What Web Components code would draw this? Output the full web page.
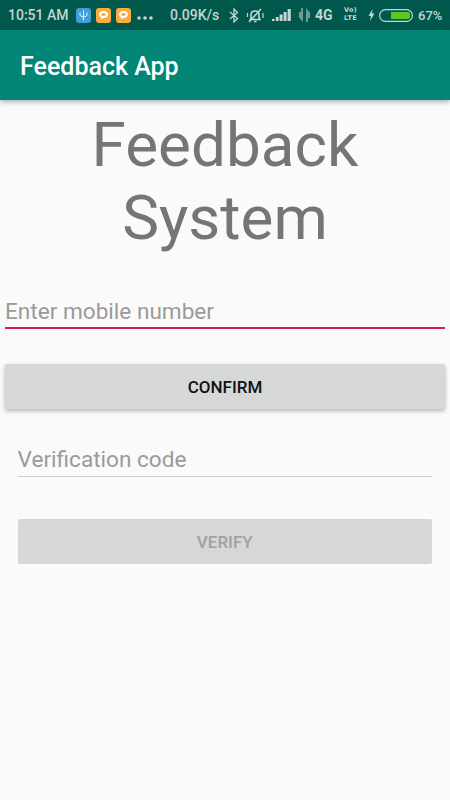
<!doctype html>
<html>
<head>
<meta charset="utf-8">
<style>
html, body { margin: 0; height: 100%; background: #fafafa; }
body { font-family: Roboto, "Liberation Sans", sans-serif; }
</style>
</head>
<body>
<app-shell>
  <status-bar slot="top"></status-bar>
  <app-bar slot="top">Feedback App</app-bar>
  <page-title>Feedback System</page-title>
  <text-field active placeholder="Enter mobile number"></text-field>
  <raised-button>CONFIRM</raised-button>
  <text-field inset placeholder="Verification code"></text-field>
  <raised-button inset disabled>VERIFY</raised-button>
</app-shell>

<script>
class AppShell extends HTMLElement {
  constructor() {
    super()
    this.attachShadow({ mode: 'open' }).innerHTML = `
<style>
:host { display: flex; flex-direction: column; height: 800px; background: #fafafa; }
main { display: flex; flex-direction: column; }
</style>
<slot name="top"></slot>
<main><slot></slot></main>`
  }
}

class StatusBar extends HTMLElement {
  constructor() {
    super()
    this.attachShadow({ mode: 'open' }).innerHTML = `
<style>
:host {
  display: flex; align-items: center; height: 30px; background: #00574b; color: #c3d6d2;
  font: 500 14px Roboto, sans-serif; white-space: nowrap; padding-left: 8px; box-sizing: border-box;
}
svg { display: block; flex: none; }
.time { width: 68px; }
.app { width: 15px; height: 15px; border-radius: 3px; margin-right: 5px; flex: none; display: flex; align-items: center; justify-content: center; }
.speed { margin-left: 17px; width: 59px; }
.g4 { font-size: 14px; font-weight: 700; margin-left: 4px; width: 19px; }
.volte { font: 700 6.5px/7.7px "DejaVu Sans", sans-serif; text-align: center; margin-left: 9px; width: 15px; letter-spacing: .3px; }
.pct { margin-left: 5px; font-size: 13px; }
</style>
<span class="time">10:51 AM</span>
<span class="app" style="background:#3f9fd8">
  <svg width="9" height="11" viewBox="0 0 9 11" fill="none" stroke="#e8f4fb" stroke-width="1"><path d="M4.5 0.5V10.5M1 2.5V5Q1 6.5 4.5 7Q8 6.5 8 5V2.5"/></svg>
</span>
<span class="app" style="background:#f9ae3c">
  <svg width="11" height="10" viewBox="0 0 11 10"><path fill="#fff" d="M5.5 1C8 1 10 2.5 10 4.5S8 8 5.5 8L3 9.3 3.4 7.5C2 6.9 1 5.8 1 4.5 1 2.5 3 1 5.5 1Z"/><ellipse cx="5.5" cy="4.5" rx="2.4" ry="1.4" fill="#f9ae3c"/></svg>
</span>
<span class="app" style="background:#f9ae3c">
  <svg width="11" height="10" viewBox="0 0 11 10"><path fill="#fff" d="M5.5 1C8 1 10 2.5 10 4.5S8 8 5.5 8L3 9.3 3.4 7.5C2 6.9 1 5.8 1 4.5 1 2.5 3 1 5.5 1Z"/><ellipse cx="5.5" cy="4.5" rx="2.4" ry="1.4" fill="#f9ae3c"/></svg>
</span>
<svg width="16" height="4" viewBox="0 0 16 4" style="margin:6px 0 0 1px"><g fill="#c3d6d2"><circle cx="2" cy="2" r="1.8"/><circle cx="8" cy="2" r="1.8"/><circle cx="14" cy="2" r="1.8"/></g></svg>
<span class="speed">0.09K/s</span>
<svg width="10" height="15" viewBox="0 0 10 15" fill="none" stroke="#c3d6d2" stroke-width="1.3"><path d="M1 4L8.5 10.5 5 14V1L8.5 4.5 1 11"/></svg>
<svg width="19" height="15" viewBox="0 0 19 15" fill="none" stroke="#c3d6d2" stroke-width="1.6" style="margin-left:7px"><path d="M5 11V6.5Q5 3 9 3T13 6.5V11M3.5 11.5H15M8 13.5H10.5M3 14L15 1"/><path d="M1.5 5V9M17 5V10" stroke-width="1.2"/></svg>
<svg width="19" height="12" viewBox="0 0 19 12" style="margin-left:7px"><g fill="#c3d6d2"><rect x="0" y="10" width="2.6" height="2"/><rect x="3.8" y="8" width="2.8" height="4"/><rect x="7.6" y="5.5" width="3" height="6.5"/><rect x="11.6" y="3" width="3" height="9"/><rect x="15.6" y="0" width="3.2" height="12"/></g></svg>
<svg width="13" height="14" viewBox="0 0 13 14" style="margin-left:7px"><g fill="#6f9a92"><path d="M1 4H3V0H5V14L1 9.5V4Z"/><path d="M8 0L12 4.5V10H10V14H8V0Z"/></g></svg>
<span class="g4">4G</span>
<span class="volte">Vo)<br>LTE</span>
<svg width="7" height="12" viewBox="0 0 7 12" style="margin-left:10px"><path fill="#c3d6d2" d="M4.5 0L0.5 7H3L2 12 6.5 4.5H4Z"/></svg>
<svg width="34" height="13" viewBox="0 0 34 13" style="margin-left:4px"><rect x="0.6" y="0.6" width="32.8" height="11.8" rx="5.9" fill="none" stroke="#c3d6d2" stroke-width="1.2"/><path d="M12 3H29Q31 3 31 5V8Q31 10 29 10H12Z" fill="#5ac81c"/></svg>
<span class="pct">67%</span>`
  }
}

class AppBar extends HTMLElement {
  constructor() {
    super()
    this.attachShadow({ mode: 'open' }).innerHTML = `
<style>
:host {
  display: flex; align-items: center; height: 70px; padding: 2px 0 0 20px; box-sizing: border-box;
  background: #008577; color: #fff; font: 500 25px Roboto, sans-serif;
  box-shadow: 0 2px 5px rgba(0,0,0,.3); position: relative;
}
</style>
<slot></slot>`
  }
}

class PageTitle extends HTMLElement {
  constructor() {
    super()
    this.attachShadow({ mode: 'open' }).innerHTML = `
<style>
:host {
  display: block; margin: 8px 60px 0; text-align: center; color: #757575;
  font: 400 62px/73px Roboto, sans-serif;
}
</style>
<slot></slot>`
  }
}

class TextField extends HTMLElement {
  constructor() {
    super()
    const active = this.hasAttribute('active')
    const inset = this.hasAttribute('inset')
    this.attachShadow({ mode: 'open' }).innerHTML = `
<style>
:host {
  display: block; box-sizing: border-box; height: 38px; padding-top: 6px;
  margin: ${inset ? '30px 18px 0 17.5px' : '37px 5px 0'};
  border-bottom: ${active ? '2px solid #d81b60' : '1px solid #cfcfcf'};
  color: #9a9a9a; font: 400 22.6px/30px Roboto, sans-serif;
}
</style>
<span class="hint"></span>`
    this.shadowRoot.querySelector('.hint').textContent = this.getAttribute('placeholder')
  }
}

class RaisedButton extends HTMLElement {
  constructor() {
    super()
    const disabled = this.hasAttribute('disabled')
    const inset = this.hasAttribute('inset')
    this.attachShadow({ mode: 'open' }).innerHTML = `
<style>
:host {
  display: flex; align-items: center; justify-content: center; box-sizing: border-box; height: 45px; padding-top: 1px;
  margin: ${inset ? '42px 18px 0 17.5px' : '35px 5px 0'};
  background: #d6d7d7; border-radius: 2px;
  color: ${disabled ? '#a0a1a1' : '#111'}; font: 500 17px Roboto, sans-serif;
  ${disabled ? '' : 'box-shadow: 0 2px 4px rgba(0,0,0,.28);'}
}
</style>
<slot></slot>`
  }
}

customElements.define('app-shell', AppShell)
customElements.define('status-bar', StatusBar)
customElements.define('app-bar', AppBar)
customElements.define('page-title', PageTitle)
customElements.define('text-field', TextField)
customElements.define('raised-button', RaisedButton)
</script>
</body>
</html>
